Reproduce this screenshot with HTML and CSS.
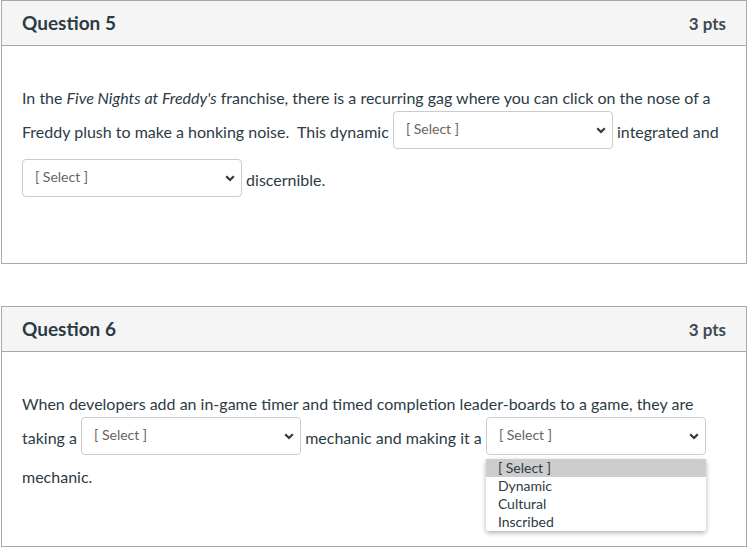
FILE: index.html
```html
<!DOCTYPE html>
<html lang="en">
<head>
  <meta charset="UTF-8">
  <title>Quiz</title>
  <link rel="stylesheet" href="styles.css">
</head>
<body>
  <div class="quiz">

    <div class="question">
      <div class="q-header">
        <span class="q-name">Question 5</span>
        <span class="q-pts">3 pts</span>
      </div>
      <div class="q-text">
        In the <em>Five Nights at Freddy's</em> franchise, there is a recurring gag where you can click on the nose of a Freddy plush to make a honking noise.&nbsp; This dynamic
        <span class="pick">
          <select><option>[ Select ]</option></select>
          <svg class="chev" width="10" height="7" viewBox="0 0 10 7"><polyline points="1.2,1.2 5,5 8.8,1.2" fill="none" stroke="#2d3b45" stroke-width="2.2"/></svg>
        </span>
        integrated and
        <span class="pick">
          <select><option>[ Select ]</option></select>
          <svg class="chev" width="10" height="7" viewBox="0 0 10 7"><polyline points="1.2,1.2 5,5 8.8,1.2" fill="none" stroke="#2d3b45" stroke-width="2.2"/></svg>
        </span>
        discernible.
      </div>
    </div>

    <div class="question">
      <div class="q-header">
        <span class="q-name">Question 6</span>
        <span class="q-pts">3 pts</span>
      </div>
      <div class="q-text">
        When developers add an in-game timer and timed completion leader-boards to a game, they are taking a
        <span class="pick">
          <select><option>[ Select ]</option></select>
          <svg class="chev" width="10" height="7" viewBox="0 0 10 7"><polyline points="1.2,1.2 5,5 8.8,1.2" fill="none" stroke="#2d3b45" stroke-width="2.2"/></svg>
        </span>
        mechanic and making it a
        <span class="pick">
          <select><option>[ Select ]</option></select>
          <svg class="chev" width="10" height="7" viewBox="0 0 10 7"><polyline points="1.2,1.2 5,5 8.8,1.2" fill="none" stroke="#2d3b45" stroke-width="2.2"/></svg>
          <ul class="options">
            <li class="active">[ Select ]</li>
            <li>Dynamic</li>
            <li>Cultural</li>
            <li>Inscribed</li>
          </ul>
        </span>
        mechanic.
      </div>
    </div>

  </div>
</body>
</html>
```

FILE: styles.css
```css
body { margin: 0; font-family: Lato, "Open Sans", sans-serif; color: #2d3b45; background: #fff; }
.quiz { padding: 0 5px 0 1px; }

.question { border: 1px solid #a8a8a8; margin-bottom: 42px; }
.q-header {
  display: flex;
  justify-content: space-between;
  align-items: center;
  height: 44px;
  padding: 0 20px;
  background: #f5f5f5;
  border-bottom: 1px solid #a8a8a8;
}
.q-name { font-size: 19px; font-weight: bold; margin-top: -2px; }
.q-pts { font-size: 17px; font-weight: bold; color: #3d4a53; }

.q-text { padding: 39px 20px 57px 20px; font-size: 16px; line-height: 25px; }

.pick {
  position: relative;
  display: inline-block;
  vertical-align: middle;
  margin: 1px 0 9px;
}
.pick select {
  display: block;
  appearance: none;
  -webkit-appearance: none;
  width: 220px;
  height: 38px;
  margin: 0;
  padding: 0 30px 4px 12px;
  border: 1px solid #c7cdd1;
  border-radius: 4px;
  background: #fff;
  font-family: Lato, sans-serif;
  font-size: 14px;
  color: #6b6360;
}
.chev { position: absolute; right: 7px; top: 16px; }

.options {
  position: absolute;
  left: 0;
  top: 42px;
  width: 220px;
  margin: 0;
  padding: 0;
  list-style: none;
  background: #fff;
  border-radius: 2px;
  box-shadow: 0 2px 5px rgba(0, 0, 0, 0.3);
  font-size: 14px;
  line-height: 18px;
  z-index: 2;
}
.options li { padding-left: 12px; }
.options li.active { background: #cdcdcd; }
```
